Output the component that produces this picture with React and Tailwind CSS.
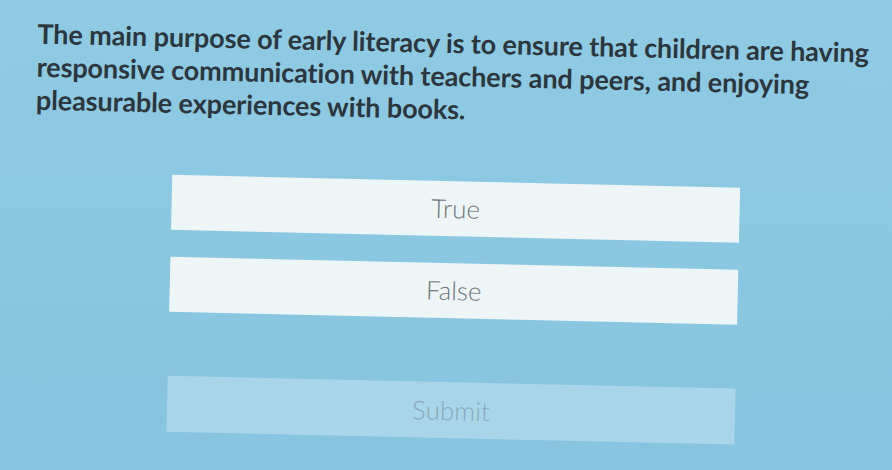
export default function App() {
  return (
    <div className="w-[892px] h-[470px] overflow-hidden bg-gradient-to-b from-[#8fcbe3] to-[#86c4df]">
      <div
        className="w-[892px] h-[470px] rotate-[1.3deg] bg-gradient-to-b from-[#8fcbe3] to-[#86c4df]"
        style={{ fontFamily: "Lato, 'Open Sans', sans-serif" }}
      >
        <div className="pl-[33px] pt-[26px]">
          <p className="text-[27px] leading-[33px] font-bold text-[#2c363c] whitespace-nowrap tracking-[-0.1px]">
            The main purpose of early literacy is to ensure that children are having
            <br />
            responsive communication with teachers and peers, and enjoying
            <br />
            pleasurable experiences with books.
          </p>
        </div>
        <div className="ml-[171px] w-[568px] mt-[56px] flex flex-col">
          <button className="h-[55px] bg-[#eef5f7] text-[26px] font-light text-[#6f7578] flex items-center justify-center">
            True
          </button>
          <button className="h-[55px] mt-[27px] bg-[#eef5f7] text-[26px] font-light text-[#6f7578] flex items-center justify-center">
            False
          </button>
          <button className="h-[56px] mt-[64px] bg-[#a9d5e9] text-[26px] font-light text-[#88a9b9] flex items-center justify-center">
            Submit
          </button>
        </div>
      </div>
    </div>
  );
}
